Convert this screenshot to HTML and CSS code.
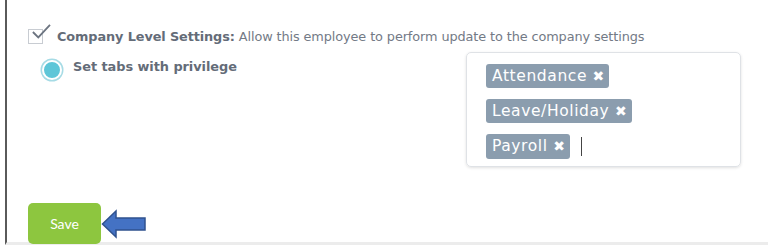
FILE: index.html
```html
<!DOCTYPE html>
<html>
<head>
<meta charset="utf-8">
<link rel="stylesheet" href="styles.css">
</head>
<body>
<div class="page">
  <div class="content">
    <div class="setting-row">
      <span class="checkbox">
        <svg class="check" viewBox="0 0 24 20" width="22" height="18"><path d="M3 10 L9 16 L22 2" fill="none" stroke="#6c7480" stroke-width="2"/></svg>
      </span>
      <span class="setting-text"><b>Company Level Settings:</b> Allow this employee to perform update to the company settings</span>
    </div>
    <div class="priv-row">
      <div class="radio-col">
        <span class="radio"></span>
        <span class="radio-label">Set tabs with privilege</span>
      </div>
      <div class="tagbox">
        <span class="tag">Attendance <span class="x">✖</span></span>
        <span class="tag">Leave/Holiday <span class="x">✖</span></span>
        <div class="last-row">
          <span class="tag">Payroll <span class="x">✖</span></span>
          <span class="caret"></span>
        </div>
      </div>
    </div>
    <div class="save-row">
      <button class="save">Save</button>
      <svg class="arrow" viewBox="0 0 46 30" width="46" height="30"><path d="M1.5 15 L15 2 L15 9 L44 9 L44 21 L15 21 L15 28 Z" fill="#4472c4" stroke="#2f528f" stroke-width="1.5" stroke-linejoin="miter"/></svg>
    </div>
  </div>
</div>
</body>
</html>
```
FILE: styles.css
```css
html, body { margin: 0; padding: 0; background: #fff; }
body { width: 768px; height: 245px; overflow: hidden; font-family: "DejaVu Sans", sans-serif; }
.page {
  height: 242px;
  border-left: 2px solid #5a5a5a;
  margin-left: 5px;
  border-bottom: 3px solid #ececec;
  box-sizing: content-box;
  position: relative;
}
.content { padding: 28px 0 0 21px; }
.setting-row { display: flex; align-items: center; height: 16px; }
.checkbox {
  width: 13px; height: 13px; border: 1px solid #c8ccd2; position: relative; flex: none;
}
.check { position: absolute; left: 1px; top: -7px; }
.setting-text {
  margin-left: 14px; font-family: "DejaVu Sans", sans-serif; font-size: 12.85px; color: #737a86; letter-spacing: -0.1px;
  white-space: nowrap;
}
.setting-text b { color: #646c78; }
.priv-row { display: flex; margin-top: 8px; }
.radio-col { display: flex; align-items: flex-start; padding-left: 14px; width: 424px; }
.radio {
  width: 16px; height: 16px; border-radius: 50%; background: #5ec6d8;
  border: 2px solid #fff; box-shadow: 0 0 0 1.5px #a6dbe5; margin-top: 8px; flex: none;
}
.radio-label {
  margin-left: 11px; margin-top: 7px; font-family: "DejaVu Sans", sans-serif; font-weight: bold; font-size: 12.9px; color: #646c78;
  letter-spacing: -0.05px;
}
.tagbox {
  width: 254px; height: 92px; border: 1px solid #dfe2e6; border-radius: 5px;
  box-shadow: 0 1px 3px rgba(0,0,0,0.12);
  padding: 11px 0 10px 19px;
  display: flex; flex-direction: column; align-items: flex-start; gap: 11px;
}
.tag {
  display: inline-block; background: #8b9dae; color: #fff; border-radius: 3px;
  font-family: "DejaVu Sans", sans-serif; font-size: 15.5px; line-height: 24px; height: 25px;
  padding: 0 5px 0 6px; white-space: nowrap; letter-spacing: 0.6px;
}
.x { font-size: 14px; margin-left: 0; letter-spacing: 0; }
.last-row { display: flex; align-items: center; }
.caret { width: 1.5px; height: 19px; background: #444; margin-left: 11px; }
.save-row { display: flex; align-items: center; margin-top: 36px; }
.save {
  width: 73px; height: 41px; background: #8dc63f; border: none; border-radius: 5px;
  color: #fff; font-family: Lato, sans-serif; font-size: 14px; padding: 0;
}
.arrow { margin-left: 0; }
```
